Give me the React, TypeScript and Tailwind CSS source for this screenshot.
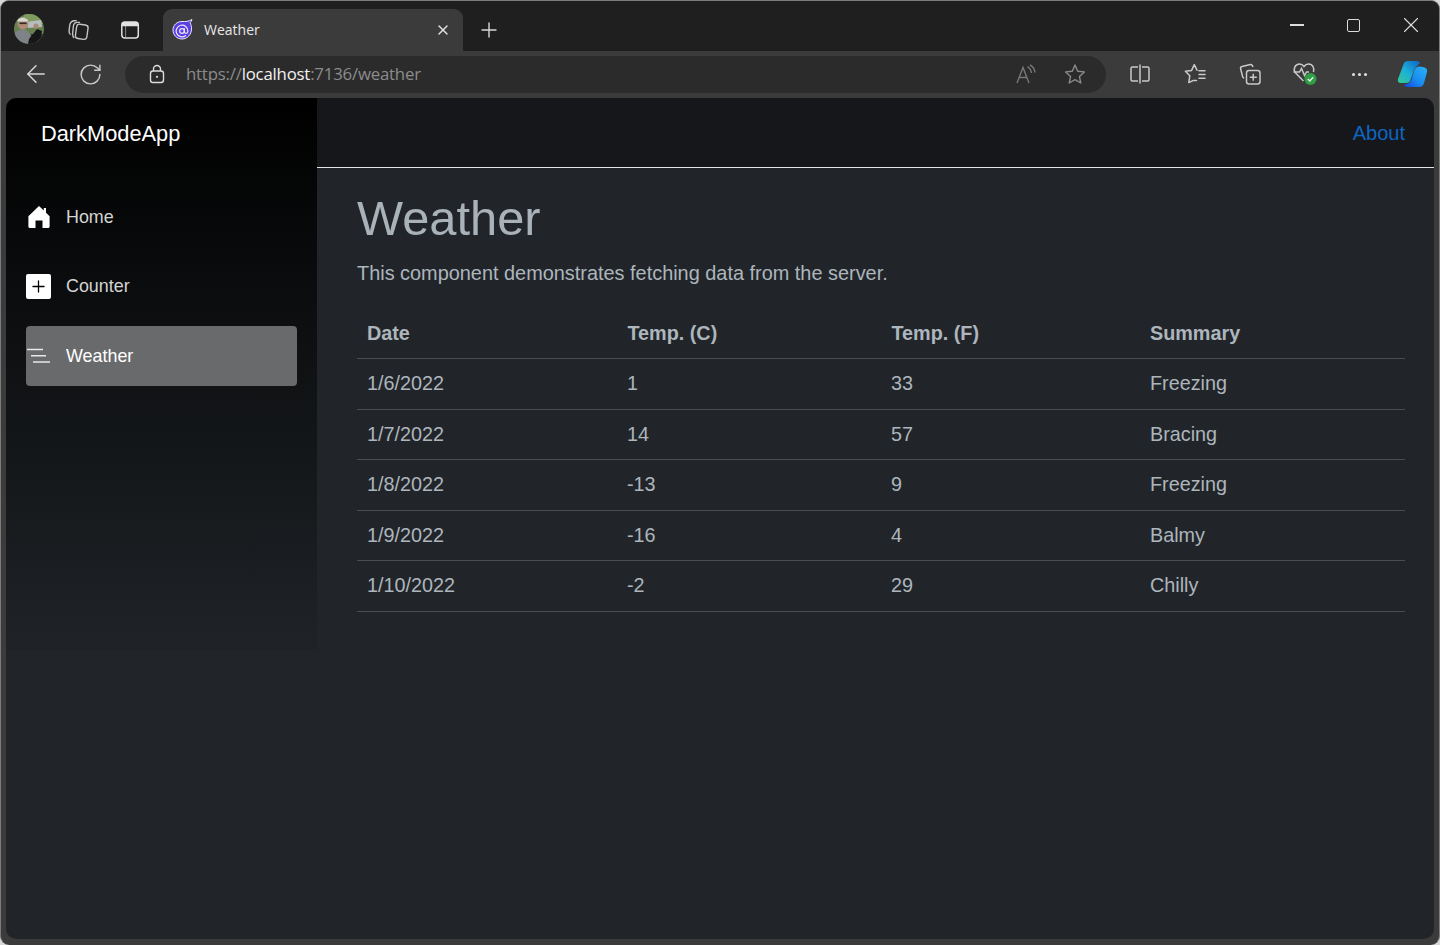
import React from 'react';
import { ArrowLeft, RotateCw, Plus, X, AtSign } from 'lucide-react';

const rows = [
  ['1/6/2022', '1', '33', 'Freezing'],
  ['1/7/2022', '14', '57', 'Bracing'],
  ['1/8/2022', '-13', '9', 'Freezing'],
  ['1/9/2022', '-16', '4', 'Balmy'],
  ['1/10/2022', '-2', '29', 'Chilly'],
];

function Avatar() {
  return (
    <svg width="30" height="30" viewBox="0 0 30 30">
      <clipPath id="av"><circle cx="15" cy="15" r="15" /></clipPath>
      <g clipPath="url(#av)">
        <rect width="30" height="30" fill="#66804f" />
        <rect x="10" y="0" width="20" height="10" fill="#7f9a5f" />
        <rect y="20" width="30" height="10" fill="#3d3b3a" />
        <path d="M12 8 L27 6 L28 13 L14 14 Z" fill="#b7bec0" />
        <path d="M0 30 L1 19 Q5 14 12 16 L17 21 L16 30 Z" fill="#7e8388" />
        <circle cx="9" cy="10" r="5.4" fill="#b08a74" />
        <path d="M3 7 Q5 3 10 3.5 L14 6 L14 7.5 L4 7.5 Z" fill="#d6d6cf" />
        <rect x="5.5" y="8.5" width="7" height="1.6" fill="#2e2a28" />
        <circle cx="22" cy="12" r="2.6" fill="#a98b78" />
        <path d="M15 25 L23 15 L28 17 L27 24 L20 30 L14 30 Z" fill="#161616" />
      </g>
    </svg>
  );
}

function CollectionsTabs() {
  return (
    <svg width="22" height="22" viewBox="0 0 22 22" fill="none" stroke="#c4c4c4" strokeWidth="1.4">
      <rect x="9" y="5.5" width="11.5" height="14.5" rx="3" transform="rotate(8 14.7 12.7)" />
      <path d="M7.2 19 C5.8 18 5.6 16.5 5.6 14.5 L6.4 7 C6.7 4.6 8 3.4 10.4 3.4 H13" />
      <path d="M3.6 15.8 C2.2 14.8 1.9 13.4 2.1 11.5 L2.7 6.5 C3 3.8 4.4 2.2 7 1.8 L9.8 1.6" />
    </svg>
  );
}

function TabView() {
  return (
    <svg width="20" height="20" viewBox="0 0 20 20" fill="none">
      <rect x="1.8" y="2" width="16.5" height="16" rx="3" stroke="#e2e2e2" strokeWidth="1.5" />
      <path d="M2 5 Q2 2 5 2 H15 Q18 2 18 5 V6.2 H2 Z" fill="#e2e2e2" />
      <path d="M5.6 6 V17" stroke="#e2e2e2" strokeWidth="1" opacity="0.55" />
    </svg>
  );
}

function BlazorIcon() {
  return (
    <div className="relative h-[21px] w-[21px]">
      <svg width="21" height="21" viewBox="0 0 21 21" className="absolute left-0 top-0">
        <path
          d="M10 2.5 C12 2.5 13.5 2.6 15 2.4 C16.5 2.2 18 1.4 20 0.5 C19.6 2 18.8 3 18 3.8 C19 5.5 19.6 7.4 19.5 10 C19.3 15.5 15.5 20 10 20 C4.8 20 1 16 1 11 C1 6 5 2.5 10 2.5 Z"
          fill="#5b3fe0"
          stroke="#e9e6ff"
          strokeWidth="1"
        />
      </svg>
      <div className="absolute left-[3px] top-[5px]">
        <AtSign className="h-[14px] w-[14px] text-[#efeaff]" strokeWidth={2} />
      </div>
    </div>
  );
}

function Lock() {
  return (
    <svg width="18" height="20" viewBox="0 0 18 20" fill="none" stroke="#dcdcdc" strokeWidth="1.4">
      <rect x="2.5" y="7" width="13" height="11.5" rx="2.5" />
      <path d="M5.5 7 V5 a3.5 3.5 0 0 1 7 0 V7" />
      <circle cx="9" cy="12.8" r="1.1" fill="#dcdcdc" stroke="none" />
    </svg>
  );
}

function ReadAloud() {
  return (
    <svg width="20" height="20" viewBox="0 0 20 20" fill="none" stroke="#777" strokeWidth="1.4">
      <path d="M1 19 L7 3.5 L13 19 M3.2 13.5 H10.8" />
      <path d="M11.5 2.5 Q15 5 15.5 9" />
      <path d="M14 0.8 Q18.5 3.5 19 8.5" />
    </svg>
  );
}

function Star({ color = '#8a8a8a' }: { color?: string }) {
  return (
    <svg width="22" height="22" viewBox="0 0 22 22" fill="none" stroke={color} strokeWidth="1.4" strokeLinejoin="round">
      <path d="M11 2 L13.7 8.2 L20.4 8.9 L15.4 13.4 L16.8 20 L11 16.6 L5.2 20 L6.6 13.4 L1.6 8.9 L8.3 8.2 Z" />
    </svg>
  );
}

function SplitScreen() {
  return (
    <svg width="22" height="22" viewBox="0 0 22 22" fill="none" stroke="#c9c9c9" strokeWidth="1.5">
      <path d="M9 4 H3.5 Q2 4 2 5.5 V16.5 Q2 18 3.5 18 H9" />
      <path d="M13 4 H18.5 Q20 4 20 5.5 V16.5 Q20 18 18.5 18 H13" />
      <path d="M11 1.5 V20.5" />
    </svg>
  );
}

function Favorites() {
  return (
    <svg width="22" height="22" viewBox="0 0 22 22" fill="none" stroke="#c9c9c9" strokeWidth="1.5" strokeLinejoin="round" strokeLinecap="round">
      <path d="M13 7.2 L10.3 1.6 L7.6 7.4 L1.4 8.3 L5.8 12.7 L4.8 19.6 L9.4 17.4 H12.5" />
      <path d="M15 7.8 H21 M15 11.5 H21 M15 15.2 H21" />
    </svg>
  );
}

function Collections() {
  return (
    <svg width="24" height="24" viewBox="0 0 24 24" fill="none" stroke="#c9c9c9" strokeWidth="1.5">
      <rect x="8.5" y="8.5" width="13.5" height="13.5" rx="2.5" />
      <path d="M15.2 11.8 V18.8 M11.8 15.3 H18.8" />
      <path d="M15 5 L14.4 3.6 Q13.8 2.3 12.4 2.6 L4 4.6 Q2.2 5 2.6 6.8 L4.6 14.5 Q5 15.8 6.2 16" />
    </svg>
  );
}

function Health() {
  return (
    <svg width="26" height="26" viewBox="0 0 26 26" fill="none">
      <path d="M11.5 20 L3.6 12 C0.5 8.5 3 3 7.5 3 C9.5 3 11 4 12 5.5 C13 4 14.5 3 16.5 3 C21 3 22.5 7.5 21.5 11" stroke="#c9c9c9" strokeWidth="1.5" />
      <path d="M1.5 11 H7.5 L9.5 7.5 L12.5 14.5 L14.5 11 H17" stroke="#c9c9c9" strokeWidth="1.5" />
      <circle cx="18.5" cy="18" r="6" fill="#2f9e44" />
      <path d="M15.8 18 L17.8 20 L21.2 16.2" stroke="#e8f5e9" strokeWidth="1.4" />
    </svg>
  );
}

function Copilot() {
  return (
    <svg width="31" height="28" viewBox="0 0 31 28">
      <defs>
        <linearGradient id="cpa" x1="0" y1="1" x2="1" y2="0">
          <stop offset="0" stopColor="#36c98f" />
          <stop offset="0.45" stopColor="#1cb0d8" />
          <stop offset="1" stopColor="#0f63c8" />
        </linearGradient>
        <linearGradient id="cpb" x1="0" y1="1" x2="1" y2="0">
          <stop offset="0" stopColor="#1244d8" />
          <stop offset="0.45" stopColor="#1a8cf0" />
          <stop offset="1" stopColor="#28b4f8" />
        </linearGradient>
      </defs>
      <path d="M7 3 Q8 1 11 1 H20 Q22 1 23 3 L19 7 Q17 9 16 13 L13 21 Q12 23 9 23 H4 Q0 23 1 19 Z" fill="url(#cpa)" />
      <path d="M20 7 Q22 6 26 7 Q31 8 30 12 L27 23 Q26 27 22 27 H10 Q8 27 7 25 L12 23 Q14 22 15 18 L17 11 Q18 8 20 7 Z" fill="url(#cpb)" />
    </svg>
  );
}

function HomeIcon() {
  return (
    <svg width="22" height="24" viewBox="0 0 22 24" fill="white">
      <path d="M11 1 L15.8 5.6 V3 H18 V7.7 L21.6 11.2 V21.5 Q21.6 23 20 23 H14.5 V15.5 H7.5 V23 H2 Q0.4 23 0.4 21.5 V11.2 Z" />
    </svg>
  );
}

function CounterIcon() {
  return (
    <div className="flex h-[25px] w-[25px] items-center justify-center rounded-[2px] bg-white">
      <Plus className="h-[19px] w-[19px] text-black" strokeWidth={1.6} />
    </div>
  );
}

function ListIcon() {
  return (
    <svg width="24" height="16" viewBox="0 0 24 16" stroke="#e8e8e8" strokeWidth="1.4">
      <path d="M1 1.5 H17 M5 7.7 H20 M7 14 H24" />
    </svg>
  );
}

function NavItem({ label, icon, active }: { label: string; icon: React.ReactNode; active?: boolean }) {
  return (
    <div className={`flex h-[59.6px] items-center rounded-[4px] ${active ? 'bg-[#696a6c] text-white' : 'text-[#d4d4d4]'}`}>
      <div className="flex w-[40px] shrink-0 items-center">{icon}</div>
      <span className="text-[17.9px]">{label}</span>
    </div>
  );
}

export default function App() {
  return (
    <div className="h-[945px] w-[1440px] overflow-hidden bg-[#d8d8d8] font-['Liberation_Sans',sans-serif]">
      <div className="flex h-full flex-col overflow-hidden rounded-[9px] border border-b-0 border-[#7c7c7c] bg-[#3b3b3b]">
        {/* Title bar */}
        <div className="flex h-[50px] shrink-0 items-end bg-[#1f1f1f] font-['Open_Sans',sans-serif]">
          <div className="flex h-[42px] w-[56px] items-start justify-center pt-[5px]"><Avatar /></div>
          <div className="flex h-[42px] w-[42px] items-center justify-center"><CollectionsTabs /></div>
          <div className="flex h-[42px] w-[62px] items-center justify-center"><TabView /></div>
          <div className="ml-[2px] flex h-[42px] w-[300px] items-center rounded-t-[9px] bg-[#3b3b3b] pb-[1px] pl-[9px] pr-[12px]">
            <BlazorIcon />
            <span className="ml-[11px] flex-1 text-[14px] text-[#e8e8e8]">Weather</span>
            <X className="h-[16px] w-[16px] text-[#e4e4e4]" strokeWidth={2} />
          </div>
          <div className="flex h-[42px] w-[52px] items-center justify-center pb-[1px]">
            <Plus className="h-[24px] w-[24px] text-[#d8d8d8]" strokeWidth={1.4} />
          </div>
          <div className="flex-1" />
          <div className="flex h-[48px] w-[57px] items-center justify-center self-start">
            <div className="h-[1.3px] w-[14px] bg-[#dcdcdc]" />
          </div>
          <div className="flex h-[48px] w-[57px] items-center justify-center self-start">
            <div className="h-[13px] w-[13px] rounded-[2px] border border-[#dcdcdc]" />
          </div>
          <div className="flex h-[48px] w-[57px] items-center justify-center self-start">
            <X className="h-[26px] w-[26px] text-[#dcdcdc]" strokeWidth={1} />
          </div>
        </div>

        {/* Toolbar */}
        <div className="flex h-[47px] shrink-0 items-center bg-[#3b3b3b] pb-[1px] font-['Open_Sans',sans-serif]">
          <div className="flex w-[70px] justify-center">
            <ArrowLeft className="h-[28px] w-[28px] text-[#d6d6d6]" strokeWidth={1.3} />
          </div>
          <div className="flex w-[40px] justify-center pr-[1px]">
            <RotateCw className="h-[25px] w-[25px] text-[#c9c9c9]" strokeWidth={1.4} />
          </div>
          <div className="ml-[14px] flex h-[37px] w-[981px] items-center rounded-full bg-[#2b2b2b] pl-[23px] pr-[20px]">
            <Lock />
            <div className="ml-[20px] flex-1 text-[16.8px] tracking-[-0.2px] text-[#8c8c8c]">
              https://<span className="text-[#f2f2f2]">localhost</span>:7136/weather
            </div>
            <ReadAloud />
            <div className="ml-[28px]"><Star /></div>
          </div>
          <div className="ml-[6px] flex w-[55px] justify-center"><SplitScreen /></div>
          <div className="flex w-[55px] justify-center"><Favorites /></div>
          <div className="flex w-[55px] justify-center"><Collections /></div>
          <div className="flex w-[55px] justify-center"><Health /></div>
          <div className="flex w-[55px] justify-center gap-[3px]">
            <div className="h-[3px] w-[3px] rounded-full bg-[#e0e0e0]" />
            <div className="h-[3px] w-[3px] rounded-full bg-[#e0e0e0]" />
            <div className="h-[3px] w-[3px] rounded-full bg-[#e0e0e0]" />
          </div>
          <div className="flex w-[50px] justify-center"><Copilot /></div>
        </div>

        {/* Page */}
        <div className="mx-[5px] mb-[6px] flex min-h-0 flex-1 overflow-hidden rounded-[10px] bg-[#212529]">
          <aside className="h-[552px] w-[311px] shrink-0 bg-[linear-gradient(180deg,#000000,#1f2327)]">
            <div className="flex h-[72px] items-center pl-[35px] text-[21.8px] text-white">DarkModeApp</div>
            <nav className="flex flex-col gap-[9.8px] pl-[20px] pr-[20px] pt-[17.6px]">
              <NavItem label="Home" icon={<div className="pl-[2px]"><HomeIcon /></div>} />
              <NavItem label="Counter" icon={<CounterIcon />} />
              <NavItem label="Weather" icon={<ListIcon />} active />
            </nav>
          </aside>
          <main className="flex min-w-0 flex-1 flex-col">
            <header className="flex h-[70px] items-center justify-end border-b border-[#e4e4e4] bg-[#15171b] pr-[29px] text-[20px] text-[#0f65c2]">
              About
            </header>
            <section className="pl-[40px] pr-[28px] pt-[21px] text-[#adb5bd]">
              <h1 className="text-[48.8px] leading-[58px] text-[#a9b1b9]">Weather</h1>
              <p className="mt-[14px] text-[19.9px] leading-[24px]">This component demonstrates fetching data from the server.</p>
              <table className="mt-[23px] w-[1048px] table-fixed border-collapse text-left text-[19.8px]">
                <colgroup>
                  <col className="w-[260px]" />
                  <col className="w-[264px]" />
                  <col className="w-[259px]" />
                  <col />
                </colgroup>
                <thead>
                  <tr className="h-[50.5px] border-b border-[#494d52]">
                    <th className="px-[10px] pt-[2px] font-bold">Date</th>
                    <th className="pl-[10.5px] pt-[2px] font-bold">Temp. (C)</th>
                    <th className="pl-[10.5px] pt-[2px] font-bold">Temp. (F)</th>
                    <th className="px-[10px] pt-[2px] font-bold">Summary</th>
                  </tr>
                </thead>
                <tbody>
                  {rows.map((r) => (
                    <tr key={r[0]} className="h-[50.6px] border-b border-[#494d52]">
                      {r.map((c, i) => (
                        <td key={i} className="px-[10px]">{c}</td>
                      ))}
                    </tr>
                  ))}
                </tbody>
              </table>
            </section>
          </main>
        </div>
      </div>
    </div>
  );
}
